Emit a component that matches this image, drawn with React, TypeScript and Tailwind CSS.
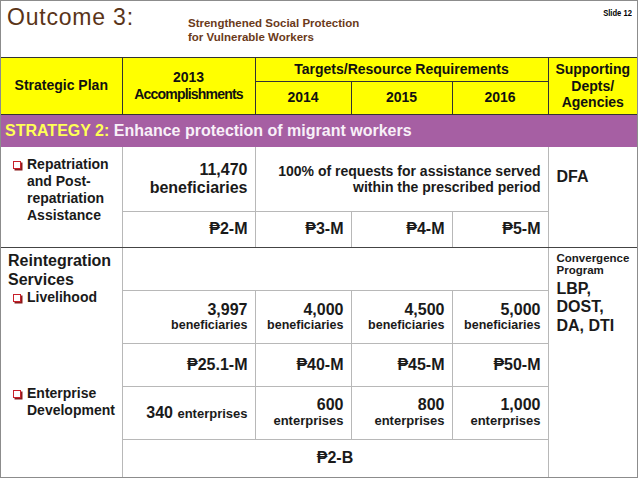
import type { ReactNode } from "react";

// one slide: title strip + outcome table
const TH = "border border-[#333] bg-[#ffff00] text-center align-middle font-bold text-[14px] text-[#111]";
const TD = "border border-[#b8b8b8] align-middle text-right pr-[7px] font-bold text-[#1a1a1a]";

function Bullet({ children, className = "" }: { children: ReactNode; className?: string }) {
  return (
    <div className={`flex items-start gap-[6px] ${className}`}>
      <span
        aria-hidden
        className="mt-[5px] inline-block h-[8px] w-[8px] shrink-0 border-[1.5px] border-[#c8202a] shadow-[1.5px_1.5px_0_#8a1c1c]"
      />
      <span>{children}</span>
    </div>
  );
}

function Stacked({ n, label, small = "text-[12.5px] leading-[14px]" }: { n: string; label: string; small?: string }) {
  return (
    <>
      <div className="text-[16px] leading-[17px]">{n}</div>
      <div className={small}>{label}</div>
    </>
  );
}

export default function App() {
  return (
    <div className="h-[478px] w-[638px] overflow-hidden border border-[#8c8c8c] bg-white font-['Liberation_Sans',Arial,sans-serif]">
      <div className="flex h-[57px] items-start border-b border-[#333]">
        <div className="w-[187px] pl-[6px] pt-[3px] text-[23px] leading-[26px] tracking-[0.8px] text-[#5a3418]">
          Outcome 3:
        </div>
        <div className="pt-[15px] text-[11.5px] font-bold leading-[14px] text-[#6b3a1a]">
          Strengthened Social Protection
          <br />
          for Vulnerable Workers
        </div>
        <div className="ml-auto pr-[5px] pt-[6px] text-[9.5px] font-bold leading-[11px] text-black">
          <span className="inline-block origin-right scale-x-[0.8]">Slide 12</span>
        </div>
      </div>

      <table className="w-[636px] table-fixed border-collapse border-hidden">
        <colgroup>
          <col className="w-[121px]" />
          <col className="w-[133px]" />
          <col className="w-[96px]" />
          <col className="w-[101px]" />
          <col className="w-[96px]" />
          <col className="w-[89px]" />
        </colgroup>
        <tbody>
          <tr className="h-[23px]">
            <th rowSpan={2} className={TH}>Strategic Plan</th>
            <th rowSpan={2} className={`${TH} leading-[17px]`}>
              2013
              <br />
              <span className="tracking-[-0.8px]">Accomplishments</span>
            </th>
            <th colSpan={3} className={TH}>Targets/Resource Requirements</th>
            <th rowSpan={2} className={`${TH} leading-[16.5px]`}>
              Supporting
              <br />
              Depts/
              <br />
              Agencies
            </th>
          </tr>
          <tr className="h-[33px]">
            <th className={TH}>2014</th>
            <th className={TH}>2015</th>
            <th className={TH}>2016</th>
          </tr>

          <tr className="h-[32px]">
            <td
              colSpan={6}
              className="border border-[#333] border-b-[#a65fa3] bg-[#a65fa3] pl-[4px] text-[16px] font-bold leading-[19px] text-[#f8f0f8]"
            >
              <span className="text-[#ffff55]">STRATEGY 2:</span> Enhance protection of migrant workers
            </td>
          </tr>

          <tr className="h-[65px]">
            <td
              rowSpan={2}
              className="border border-[#b8b8b8] border-b-[#444] pl-[12px] pt-[9px] align-top text-[14px] font-bold leading-[17px] text-[#1a1a1a]"
            >
              <Bullet>
                Repatriation
                <br />
                and Post-
                <br />
                repatriation
                <br />
                Assistance
              </Bullet>
            </td>
            <td className={`${TD} text-[16px] leading-[18px]`}>
              11,470
              <br />
              beneficiaries
            </td>
            <td colSpan={3} className={`${TD} text-[14px] leading-[16px]`}>
              100% of requests for assistance served
              <br />
              within the prescribed period
            </td>
            <td
              rowSpan={2}
              className="border border-[#b8b8b8] border-b-[#444] pl-[8px] pt-[20px] align-top text-[16px] font-bold leading-[19px] text-[#1a1a1a]"
            >
              DFA
            </td>
          </tr>
          <tr className="h-[36px]">
            <td className={`${TD} border-b-[#444] text-[16px]`}>₱2-M</td>
            <td className={`${TD} border-b-[#444] text-[16px]`}>₱3-M</td>
            <td className={`${TD} border-b-[#444] text-[16px]`}>₱4-M</td>
            <td className={`${TD} border-b-[#444] text-[16px]`}>₱5-M</td>
          </tr>

          <tr className="h-[43px]">
            <td
              rowSpan={5}
              className="border border-[#b8b8b8] border-t-[#444] align-top font-bold text-[#1a1a1a]"
            >
              <div className="pl-[7px] pt-[3px] text-[16px] leading-[19px]">
                Reintegration
                <br />
                Services
              </div>
              <div className="pl-[12px] text-[14px] leading-[17px]">
                <Bullet className="mt-[0px]">Livelihood</Bullet>
                <Bullet className="mt-[79px]">
                  Enterprise
                  <br />
                  Development
                </Bullet>
              </div>
            </td>
            <td colSpan={4} className="border border-[#b8b8b8] border-t-[#444]" />
            <td
              rowSpan={5}
              className="border border-[#b8b8b8] border-t-[#444] pl-[8px] pt-[4px] align-top font-bold text-[#1a1a1a]"
            >
              <div className="text-[11.5px] leading-[12.5px]">
                Convergence
                <br />
                Program
              </div>
              <div className="mt-[3px] text-[16px] leading-[18.5px]">
                LBP,
                <br />
                DOST,
                <br />
                DA, DTI
              </div>
            </td>
          </tr>
          <tr className="h-[53px]">
            <td className={TD}><Stacked n="3,997" label="beneficiaries" /></td>
            <td className={TD}><Stacked n="4,000" label="beneficiaries" /></td>
            <td className={TD}><Stacked n="4,500" label="beneficiaries" /></td>
            <td className={TD}><Stacked n="5,000" label="beneficiaries" /></td>
          </tr>
          <tr className="h-[43px]">
            <td className={`${TD} text-[16px]`}>₱25.1-M</td>
            <td className={`${TD} text-[16px]`}>₱40-M</td>
            <td className={`${TD} text-[16px]`}>₱45-M</td>
            <td className={`${TD} text-[16px]`}>₱50-M</td>
          </tr>
          <tr className="h-[53px]">
            <td className={TD}>
              <span className="text-[16px]">340</span> <span className="text-[13px]">enterprises</span>
            </td>
            <td className={TD}><Stacked n="600" label="enterprises" small="text-[13px] leading-[16px]" /></td>
            <td className={TD}><Stacked n="800" label="enterprises" small="text-[13px] leading-[16px]" /></td>
            <td className={TD}><Stacked n="1,000" label="enterprises" small="text-[13px] leading-[16px]" /></td>
          </tr>
          <tr className="h-[38px]">
            <td colSpan={4} className="border border-[#b8b8b8] text-center align-middle text-[16px] font-bold text-[#1a1a1a]">
              ₱2-B
            </td>
          </tr>
        </tbody>
      </table>
    </div>
  );
}
